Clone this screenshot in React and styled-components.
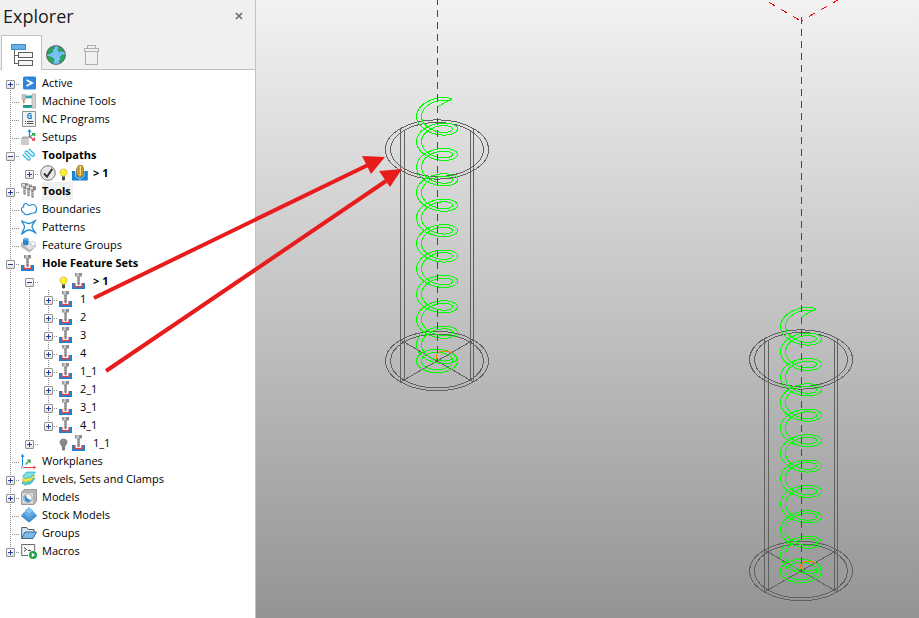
import React, { useState } from "react";
import styled, { createGlobalStyle } from "styled-components";

const GlobalStyle = createGlobalStyle`
  * { box-sizing: border-box; }
  body { margin: 0; background: #ffffff; }
`;

const Page = styled.div`
  position: relative;
  display: flex;
  min-height: 100vh;
  overflow: hidden;
  font-family: "Open Sans", sans-serif;
  color: #000000;
`;

const Sidebar = styled.aside`
  flex: 0 0 256px;
  display: flex;
  flex-direction: column;
  background: #ffffff;
  border-right: 1px solid #c3c3c3;
`;

const Header = styled.header`
  display: flex;
  align-items: center;
  justify-content: space-between;
  height: 35px;
  padding: 0 10px 3px 3px;
  background: #f0f0f0;
`;

const Title = styled.h1`
  margin: 0;
  font-size: 18px;
  line-height: 24px;
  font-weight: 400;
  color: #1b1b1b;
`;

const IconButton = styled.button`
  display: grid;
  place-items: center;
  width: 12px;
  height: 12px;
  padding: 0;
  border: 0;
  background: transparent;
`;

const TabList = styled.div`
  display: flex;
  height: 35px;
  padding-left: 1px;
  background: #f0f0f0;
  box-shadow: inset 0 -1px #c0c0c0;
`;

const Tab = styled.button`
  display: grid;
  place-items: center;
  width: ${(p) => (p.$active ? 41 : 28)}px;
  margin-right: ${(p) => (p.$active ? 0 : 7)}px;
  padding: 3px 0 0;
  border: 1px solid ${(p) => (p.$active ? "#c0c0c0" : "transparent")};
  border-bottom: 0;
  background: ${(p) => (p.$active ? "#ffffff" : "transparent")};
`;

const Tree = styled.ul`
  flex: 1;
  margin: 0;
  padding: 4px 0 0 1px;
  list-style: none;
`;

const Row = styled.li`
  display: flex;
  align-items: center;
  height: 18px;
`;

const dots = (dir) =>
  `repeating-linear-gradient(${dir}, #8c8c8c 0 1px, transparent 1px 2px)`;

const lineHeight = { full: "18px", top: "10px", bottom: "8px", none: "0" };

const Guide = styled.span`
  display: grid;
  place-items: center;
  flex: 0 0 19px;
  height: 18px;
  padding-top: 3px;
  background-image: ${dots("to bottom")}, ${dots("to right")};
  background-repeat: no-repeat;
  background-size: 1px ${(p) => lineHeight[p.$line]},
    ${(p) => (p.$branch ? "10px 1px" : "0 0")};
  background-position: 9px ${(p) => (p.$line === "bottom" ? "10px" : "0")}, 9px 10px;
`;

const Expander = styled.button`
  display: grid;
  place-items: center;
  width: 9px;
  height: 9px;
  padding: 0;
  border: 1px solid #919191;
  border-radius: 1px;
  background: linear-gradient(#ffffff, #e4e4e4);
`;

const Slot = styled.span`
  flex: 0 0 ${(p) => p.$width}px;
  height: 16px;
  padding-left: 1px;
  line-height: 0;
`;

const Label = styled.span`
  padding-right: 2px;
  font-size: 11px;
  line-height: 18px;
  font-weight: ${(p) => (p.$bold ? 700 : 400)};
  white-space: nowrap;
  background: ${(p) => (p.$selected ? "#f0f0f0" : "transparent")};
`;

const Viewport = styled.main`
  flex: 1;
  min-width: 0;
  overflow: hidden;
  background: linear-gradient(#f2f2f2, #949494);
`;

const Scene = styled.svg`
  display: block;
`;

const Annotations = styled.svg`
  position: absolute;
  top: 0;
  left: 0;
  pointer-events: none;
`;

const Icon = ({ children, width = 16 }) => (
  <svg width={width} height="16" viewBox={`0 0 ${width} 16`} fill="none" aria-hidden="true">
    {children}
  </svg>
);

const HoleIcon = () => (
  <Icon>
    <path d="M0 10h3v3h7v-3h3v6H0z" fill="#1c82d2" />
    <path d="M3 10v3.500h7V10" stroke="#f04141" strokeWidth="1.400" />
    <path d="M3.800 9.500h5.400v3.200H3.800z" fill="#fff" />
    <path d="M3 0h7v3.500H3z" fill="#8e8e8e" />
    <path d="M4.500 0h2.400v3.500H4.500z" fill="#cacaca" />
    <path d="M5.300 3.500h2.500V11l-.8 1.200h-.9L5.300 11z" fill="#808080" />
    <path d="m5.300 6.500 2.500-1M5.300 9l2.500-1" stroke="#bcbcbc" strokeWidth=".8" />
  </Icon>
);

const CheckIcon = () => (
  <Icon>
    <circle cx="8" cy="8" r="7.300" fill="#e8e8e8" stroke="#777" />
    <path d="m4 8.500 3 3.200 5.300-8" stroke="#333" strokeWidth="2" />
  </Icon>
);

const BulbIcon = ({ on }) => (
  <Icon width={10}>
    <path
      d="M4.500 4C2.500 4 1 5.200 1 7.200c0 1.800 1.500 2.300 1.800 4h3.400c.3-1.700 1.800-2.200 1.800-4C8 5.200 6.500 4 4.500 4z"
      fill={on ? "#ffef26" : "#858585"}
      stroke={on ? "#c9b019" : "#777"}
      strokeWidth=".7"
    />
    <path d="M3 6.200c.3-.8.8-1 1.500-1" stroke={on ? "#fff" : "#aaa"} />
    <path d="M3 11.500h3v2.800l-.8 1.200H3.800L3 14.300z" fill={on ? "#4c4c4c" : "#777"} />
  </Icon>
);

const DrillIcon = () => (
  <Icon>
    <path d="M0 6h3.500l4.300 7L12 6h3.800v9.500H0z" fill="#1c82d2" />
    <path d="M3.500 6v5.500L8 14.500l4-3V6" stroke="#9cd4fa" />
    <path d="M4.500 4 7 0h3l1.500 3.500v6L8 12.500 4.500 9.500z" fill="#e5b02d" stroke="#835d1c" strokeWidth=".7" />
    <path d="M6.800 2.500v7M9.800 2.500v7" stroke="#8f651f" strokeWidth=".8" />
    <path d="M8.300 1v9" stroke="#fff0a2" />
  </Icon>
);

const icons = {
  active: (
    <Icon>
      <rect x="2" y="1.500" width="13" height="13" rx="1.500" fill="#2e86dc" />
      <path d="m5.500 5 5.500 3-5.500 3" stroke="#fff" strokeWidth="1.800" />
    </Icon>
  ),
  machine: (
    <Icon>
      <path d="M4 2.500h8v2.800H4z" fill="#34aaa5" />
      <path d="M2 12.500h9v2.500H2z" fill="#27a09b" />
      <path d="M2 12.500h9" stroke="#176c6a" strokeWidth=".8" />
      <path d="M1 1.500h3.500v5H1z" fill="#c4c4c4" stroke="#999" strokeWidth=".5" />
      <path d="M2 6.500h1.700v3.300l-.8 1-.9-1z" fill="#e18d22" />
      <path d="M11 1h3.500v14H11z" fill="#d4d4d4" stroke="#a0a0a0" strokeWidth=".7" />
    </Icon>
  ),
  nc: (
    <Icon>
      <path d="M1.500.500h13v15h-13z" fill="#f3f3f3" stroke="#909090" />
      <text x="5.500" y="8" fontFamily="Open Sans, sans-serif" fontSize="8" fontWeight="700" fill="#1683d2">G</text>
      <path d="M4 10.500h1m1 0h6.500M4 12.500h1m1 0h6.500" stroke="#555" />
    </Icon>
  ),
  setups: (
    <Icon>
      <path d="m0 9.500 2-2h7l-1.500 2V16H0z" fill="#aaa" />
      <path d="M0 9.500h7V16H0z" fill="#ccc" />
      <path d="M8.500 8V1M7 3l1.500-2L10 3" stroke="#168bd8" strokeWidth="1.200" />
      <path d="m8.500 8 5-3m-2.500-.3h2.700V7" stroke="#28a449" strokeWidth="1.200" />
      <path d="m8.500 8 5 3m0-2.500v2.700H11" stroke="#e34048" strokeWidth="1.200" />
    </Icon>
  ),
  toolpaths: (
    <Icon>
      <path d="m1.500 7.500 6 6M3.500 5.500l6 6M5.700 3.700l6 6M8 1.700l6 6M9.500 11.500l-1.800 2M11.700 9.700 14 7.700M3.500 5.500l2.200-1.800" stroke="#35bce3" strokeWidth="1.300" />
    </Icon>
  ),
  tools: (
    <Icon>
      {[0, 4, 8].map((x, i) => (
        <g key={x} transform={`translate(${x} ${i * 1.5})`}>
          <path d="M.5.500h6v3.500h-6z" fill="#dedede" stroke="#777" strokeWidth=".7" />
          <path d="M4 1h2.300v3H4z" fill="#808080" />
          <path d="M2.300 4h2.400v7l-1.200 1-1.200-1z" fill="#858585" />
          <path d="m2.300 7 2.400-1M2.300 9.500l2.400-1" stroke="#e2e2e2" strokeWidth=".8" />
        </g>
      ))}
    </Icon>
  ),
  boundaries: (
    <Icon>
      <path d="M4.500 2.500C2.500 2.500 2.500 5 2.500 6 .5 6 0 8 .7 9.700c.7 2 2 1.300 2.300 2.300.7 2 3 2 4.500 1.400 1.500-.6 3-1.400 5-1.400 2 0 3-2 3-4 0-3-2-4.500-4-4.500-1.500 0-2 1-3.500 1-1.300 0-1.500-2-3.500-2z" stroke="#238bd0" strokeWidth="1.200" />
    </Icon>
  ),
  patterns: (
    <Icon>
      <path d="M1 2c3 1.500 5 2.500 7 2.500S12 2.500 14.500 1.500C13 4 11 5 11 7.500s2.500 4 3.500 6.500c-2.500-1.500-4-3-6-3S3 13 1 15c0-3 2.500-4.500 2.500-7S1.500 4.500 1 2z" stroke="#238bd0" strokeWidth="1.300" />
    </Icon>
  ),
  features: (
    <Icon>
      <path d="m0 6 5-3.500L15.500 9l-7 6.500L0 10z" fill="#b3b8bd" />
      <path d="M.5 6 5.500 2.500 15 9l-6.500 4z" fill="#dfe3e7" />
      <path d="M2 2v5c0 1.800 5.500 1.800 5.500 0V2z" fill="#2b83cc" />
      <ellipse cx="4.800" cy="2.200" rx="2.800" ry="1.400" fill="#65b2ea" />
      <path d="m9 7 2-3 3.500 2-1.500 3.500z" fill="#fff" stroke="#9ba1a6" strokeWidth=".6" />
    </Icon>
  ),
  hole: <HoleIcon />,
  workplanes: (
    <Icon>
      <path d="M1.500 13V2M0 4l1.500-2.500L3 4" stroke="#168bd8" />
      <path d="M3 14.500h11M12.500 13l2 1.500-2 1.500" stroke="#e34048" />
      <path d="m4.500 11.500 4.500-4.500m-3 0h3v3" stroke="#27a449" strokeWidth="1.200" />
      <rect x=".5" y="13.500" width="2" height="2" fill="#fff" stroke="#aaa" strokeWidth=".7" />
    </Icon>
  ),
  levels: (
    <Icon>
      <path d="m1 12 4-4.500h9L10.500 12c-2 2.500-4 0-6 2.500z" fill="#4ecdd3" stroke="#239eac" strokeWidth=".6" />
      <path d="m1 9 4-4.500h9L10.500 9c-2 2.500-4 0-6 2.500z" fill="#f6e83f" stroke="#b8a92a" strokeWidth=".6" />
      <path d="m1.500 5.500 4-4.500h9L11 5.500c-2 2.500-4 0-6 2.500z" fill="#7adde4" stroke="#239eac" strokeWidth=".6" />
    </Icon>
  ),
  models: (
    <Icon>
      <path d="m.5 3.500 2.500-3h12.500V12L13 15.500H.5z" fill="#b6b6b6" stroke="#888" strokeWidth=".8" />
      <path d="M1 3.500h11.500V15H1z" fill="#dedede" stroke="#999" strokeWidth=".5" />
      <circle cx="6.800" cy="9.200" r="4.300" fill="#f4f8fc" stroke="#8c8c8c" strokeWidth=".7" />
      <path d="M5 6c0 3 2 4.500 5.300 5C8 14.500 3 13 3.300 8.500 3.400 7 4 6.500 5 6z" fill="#3389cb" />
    </Icon>
  ),
  stock: (
    <Icon>
      <path d="m0 9 8-5 8 5-8 6.500z" fill="#337fbd" />
      <path d="m0 8 8-5 8 5-8 6z" fill="#529dd9" />
      <path d="m2 6.500 6-4.500 6 4.500L8 11z" fill="#69b1e8" stroke="#3481bd" strokeWidth=".5" />
      <path d="m4 4 4-3.500L12 4 8 7.500z" fill="#8bc9f6" stroke="#3481bd" strokeWidth=".5" />
    </Icon>
  ),
  groups: (
    <Icon>
      <path d="M.7 13.500v-11h5l1.500 2H13V7" fill="#cde7fb" stroke="#595959" />
      <path d="M.7 13.500 4 7h11.500L12 13.500z" fill="#76bcf1" stroke="#4b667a" />
    </Icon>
  ),
  macros: (
    <Icon>
      <path d="M7 12.500H.7V1.500h13V8" fill="#fafafa" stroke="#6a6a6a" />
      <path d="m3 4.500 2.500 2L3 8.500M7 7.500h3" stroke="#444" />
      <circle cx="12" cy="12" r="4" fill="#22a447" />
      <path d="m10.800 9.800 3.200 2.200-3.200 2.200z" fill="#fff" />
    </Icon>
  ),
};

const rows = [
  { label: "Active", icon: "active", toggle: "+", lines: ["bottom"] },
  { label: "Machine Tools", icon: "machine" },
  { label: "NC Programs", icon: "nc" },
  { label: "Setups", icon: "setups" },
  { label: "Toolpaths", icon: "toolpaths", toggle: "-", bold: true },
  { label: "> 1", icon: "drill", toggle: "+", bold: true, lines: ["full", "none"], check: true, bulb: "on" },
  { label: "Tools", icon: "tools", toggle: "+", bold: true, selected: true },
  { label: "Boundaries", icon: "boundaries" },
  { label: "Patterns", icon: "patterns" },
  { label: "Feature Groups", icon: "features" },
  { label: "Hole Feature Sets", icon: "hole", toggle: "-", bold: true },
  { label: "> 1", icon: "hole", toggle: "-", bold: true, lines: ["full", "bottom"], bulb: "on" },
  ...["1", "2", "3", "4", "1_1", "2_1", "3_1", "4_1"].map((label, i) => ({
    label,
    icon: "hole",
    toggle: "+",
    lines: ["full", "full", i === 7 ? "top" : "full"],
  })),
  { label: "1_1", icon: "hole", toggle: "+", lines: ["full", "top"], bulb: "off" },
  { label: "Workplanes", icon: "workplanes" },
  { label: "Levels, Sets and Clamps", icon: "levels", toggle: "+" },
  { label: "Models", icon: "models", toggle: "+" },
  { label: "Stock Models", icon: "stock" },
  { label: "Groups", icon: "groups" },
  { label: "Macros", icon: "macros", toggle: "+", lines: ["top"] },
];

const TreeRow = ({ row }) => {
  const lines = row.lines || ["full"];
  const last = lines.length - 1;
  return (
    <Row role="treeitem" aria-level={lines.length} aria-selected={!!row.selected}>
      {lines.map((line, i) => (
        <Guide key={i} $line={line} $branch={i === last}>
          {i === last && row.toggle && (
            <Expander aria-label={`${row.toggle === "+" ? "Expand" : "Collapse"} ${row.label}`}>
              <svg width="7" height="7" viewBox="0 0 7 7" shapeRendering="crispEdges">
                <path d={row.toggle === "+" ? "M1 3.500h5M3.500 1v5" : "M1 3.500h5"} stroke="#24409a" />
              </svg>
            </Expander>
          )}
        </Guide>
      ))}
      {row.bulb && (
        <>
          <Slot $width={19}>{row.check && <CheckIcon />}</Slot>
          <Slot $width={13}><BulbIcon on={row.bulb === "on"} /></Slot>
        </>
      )}
      <Slot $width={22}>{row.icon === "drill" ? <DrillIcon /> : icons[row.icon]}</Slot>
      <Label $bold={row.bold} $selected={row.selected}>{row.label}</Label>
    </Row>
  );
};

const TreeTabIcon = () => (
  <svg width="22" height="22" viewBox="0 0 22 22" fill="none" shapeRendering="crispEdges">
    <path d="M3.500 6v13.500H7M3.500 11.500H7" stroke="#606060" />
    <path d="M.5.500h14v5H.5z" fill="#63b1e5" stroke="#3c91c8" />
    <path d="M7.500 8.500h14v5h-14zM7.500 16.500h14v5h-14z" fill="#f5f5f5" stroke="#606060" />
  </svg>
);

const GlobeIcon = () => (
  <svg width="20" height="20" viewBox="0 0 20 20">
    <circle cx="10" cy="10" r="9.400" fill="#73c3f5" />
    <g fill="#26ad4c" stroke="#39756b" strokeWidth=".6">
      <path d="M4 2.500 9 1l-1 3-2 .5 1 2-3 2-3 .5C1 6 2 4 4 2.500z" />
      <path d="m12 1 4 2 2.500 4-3-1-2 1-2-2.500 1.500-1z" />
      <path d="m1 11 4 1 3 2-1 4.500C3.500 17.500 1.500 15 1 11z" />
      <path d="m14 12 2-2h3c0 4-2 6.500-5 8l-1-2 2-2z" />
    </g>
    <circle cx="10" cy="10" r="9.400" fill="none" stroke="#5e6668" />
  </svg>
);

const TrashIcon = () => (
  <svg width="15" height="20" viewBox="0 0 15 20" fill="none" shapeRendering="crispEdges">
    <path d="M3.500 3V.5h8V3M.5 3.500h14v3H.5zM1.500 6.500h12v13h-12z" stroke="#adadad" />
  </svg>
);

/* Projected helix: round in plan, flattened by the tilt of the view. */
const helixPath = (radius) => {
  const points = [];
  const start = -2 * Math.PI + 0.75;
  const end = 18 * Math.PI;
  for (let t = start; t <= end; t += 0.12) {
    const x = 437 + radius * Math.cos(t);
    const y = 129 - radius * 0.57 * Math.sin(t) + (25.4 * t) / (2 * Math.PI);
    points.push(`${x.toFixed(1)},${y.toFixed(1)}`);
  }
  return points.join(" ");
};

const outerHelix = helixPath(20.5);
const innerHelix = helixPath(15.5);

const HoleModel = () => (
  <g fill="none" shapeRendering="crispEdges">
    <g stroke="#606060">
      {[149.5, 361].map((cy) => (
        <g key={cy}>
          <ellipse cx="437" cy={cy} rx="51.500" ry="29.700" />
          <ellipse cx="437" cy={cy} rx="46.500" ry="27" />
        </g>
      ))}
      <path d="M400.500 128v254M404.500 130v250M470.500 130v250M473.500 128v254" />
      <path d="m400.500 340 73 42m0-42-73 42" />
    </g>
    <g stroke="#00ff00">
      <polyline points={outerHelix} />
      <polyline points={innerHelix} />
      <path d="M452.500 98.500 449 101M452.500 98.500 438 106.500" />
      <ellipse cx="437" cy="361" rx="20.500" ry="11.700" />
      <ellipse cx="437" cy="361" rx="15.500" ry="8.800" />
    </g>
    <path d="M438 360c-4-5 0-9 6-8.500 3 .5 5-.5 7 1.500" stroke="#ff8000" />
  </g>
);

const App = () => {
  const [tab, setTab] = useState(0);
  return (
    <Page>
      <GlobalStyle />
      <Sidebar>
        <Header>
          <Title>Explorer</Title>
          <IconButton aria-label="Close">
            <svg width="8" height="8" viewBox="0 0 8 8">
              <path d="m1 1 6 6m0-6L1 7" stroke="#6e6e6e" strokeWidth="1.700" />
            </svg>
          </IconButton>
        </Header>
        <TabList role="tablist">
          {[TreeTabIcon, GlobeIcon, TrashIcon].map((TabIcon, i) => (
            <Tab
              key={i}
              role="tab"
              aria-label={["Tree", "Web", "Recycle bin"][i]}
              aria-selected={tab === i}
              $active={tab === i}
              onClick={() => setTab(i)}
            >
              <TabIcon />
            </Tab>
          ))}
        </TabList>
        <Tree role="tree">
          {rows.map((row, i) => <TreeRow key={i} row={row} />)}
        </Tree>
      </Sidebar>
      <Viewport>
        <Scene width="663" height="617" viewBox="256 0 663 617">
          <HoleModel />
          <g transform="translate(364 210)"><HoleModel /></g>
          <g stroke="#f00000" fill="none" shapeRendering="crispEdges">
            <path d="M437.500-2v363M801.500 17v555" strokeDasharray="7 5" />
            <path d="m801 21-36-21" strokeDasharray="7 7" strokeDashoffset="12" />
            <path d="m801 21 37-21" strokeDasharray="7 7" strokeDashoffset="5" />
          </g>
        </Scene>
      </Viewport>
      <Annotations width="420" height="400" viewBox="0 0 420 400">
        <g stroke="#e81c1c" strokeWidth="4">
          <path d="m94 298 274-133M106 371l280-190" />
        </g>
        <path d="m385 157-14 17-9-18zM402 169l-12 18-11-16z" fill="#e81c1c" />
      </Annotations>
    </Page>
  );
};

export default App;
